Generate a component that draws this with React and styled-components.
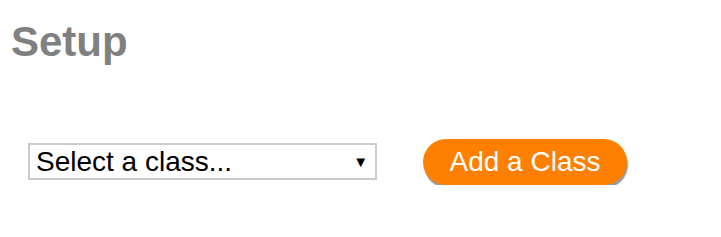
import React from "react";
import styled, { createGlobalStyle } from "styled-components";

const GlobalStyle = createGlobalStyle`
  body {
    margin: 8px;
    background: #ffffff;
    font-family: "Liberation Sans", Arial, sans-serif;
  }
`;

const Title = styled.h1`
  margin: 10px 0 0 3px;
  font-size: 42px;
  line-height: 48px;
  font-weight: bold;
  color: #808080;
`;

const Row = styled.div`
  display: flex;
  align-items: center;
  gap: 46px;
  margin-top: 71px;
  padding-left: 20px;
`;

const SelectWrap = styled.div`
  position: relative;
  width: 349px;
  height: 37px;

  &::after {
    content: "▼";
    position: absolute;
    right: 9px;
    top: 50%;
    transform: translateY(-50%);
    font-size: 15px;
    color: #000;
    pointer-events: none;
  }
`;

const ClassSelect = styled.select`
  appearance: none;
  -webkit-appearance: none;
  box-sizing: border-box;
  width: 100%;
  height: 100%;
  border: 2px solid #cccccc;
  border-radius: 0;
  background: #ffffff;
  padding: 0 0 0 6px;
  font-family: "Liberation Sans", Arial, sans-serif;
  font-size: 28px;
  color: #000;
  outline: none;
`;

const AddButton = styled.button`
  box-sizing: border-box;
  width: 204px;
  height: 46px;
  margin-top: 2px;
  border: none;
  border-radius: 23px;
  background: #ff8000;
  color: #ffffff;
  font-family: "Liberation Sans", Arial, sans-serif;
  font-size: 28px;
  padding: 0;
  box-shadow: 1px 3px 1px #999999;
  cursor: pointer;
`;

export default function App() {
  return (
    <>
      <GlobalStyle />
      <Title>Setup</Title>
      <Row>
        <SelectWrap>
          <ClassSelect defaultValue="">
            <option value="">Select a class...</option>
          </ClassSelect>
        </SelectWrap>
        <AddButton>Add a Class</AddButton>
      </Row>
    </>
  );
}
